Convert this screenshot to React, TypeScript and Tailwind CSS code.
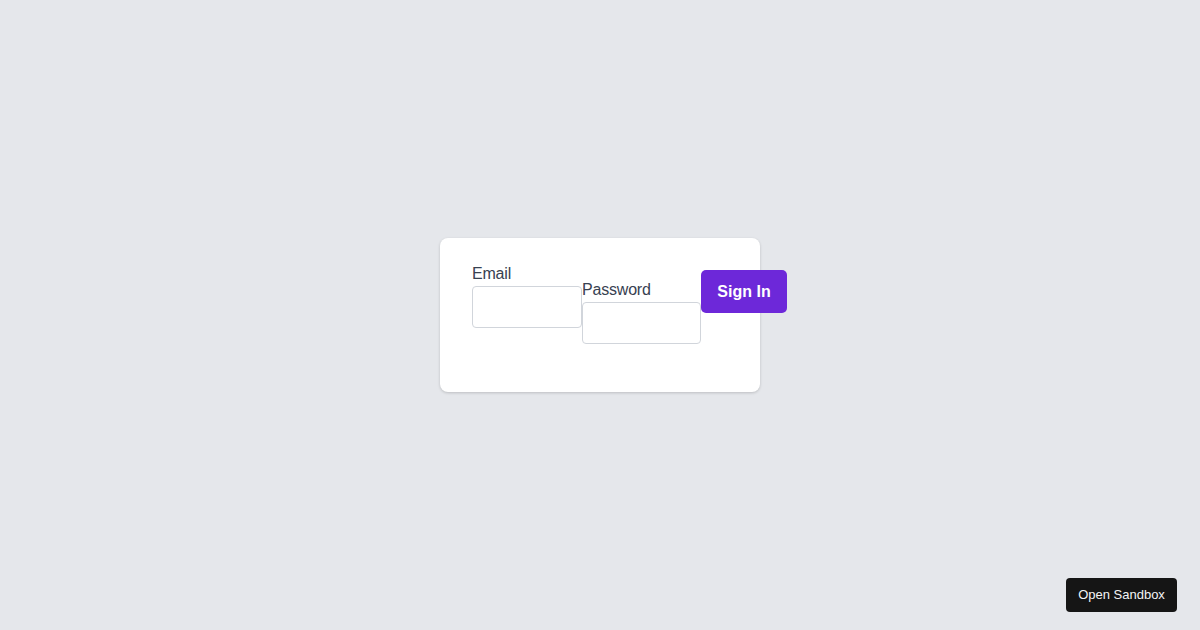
export default function App() {
  return (
    <div className="flex min-h-screen w-full items-center justify-center bg-[#e5e7eb] font-['Liberation_Sans',Arial,sans-serif]">
      <div className="w-80 rounded-lg bg-white px-8 pb-8 pt-6 shadow-[0_1px_3px_rgba(0,0,0,0.18)]">
        <form className="flex items-start" onSubmit={e => e.preventDefault()}>
          <div className="mb-4 flex flex-col">
            <label className="text-base leading-6 tracking-[-0.2px] text-[#374151]">Email</label>
            <input type="email" className="h-[42px] w-[110px] rounded border border-[#d1d5db] px-2" />
          </div>
          <div className="mb-4 mt-4 flex flex-col">
            <label className="text-base leading-6 tracking-[-0.2px] text-[#374151]">Password</label>
            <input type="password" className="h-[42px] w-[119px] rounded border border-[#d1d5db] px-2" />
          </div>
          <button
            type="submit"
            className="mt-2 h-[43px] w-[86px] shrink-0 rounded-[5px] bg-[#6d28d9] text-base font-bold text-white"
          >
            Sign In
          </button>
        </form>
      </div>

      <button className="fixed bottom-[18px] right-[23px] h-[34px] w-[111px] rounded bg-[#151515] text-[13px] text-[#f3f4f6]">
        Open Sandbox
      </button>
    </div>
  );
}
